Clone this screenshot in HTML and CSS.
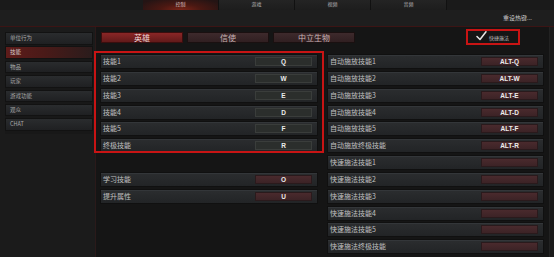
FILE: index.html
```html
<!DOCTYPE html>
<html lang="zh">
<head>
<meta charset="utf-8">
<link rel="stylesheet" href="styles.css">
</head>
<body>
<div class="top">
  <div class="top-spacer"></div>
  <div class="tab active">控制</div>
  <div class="tab">游戏</div>
  <div class="tab">视频</div>
  <div class="tab">音频</div>
</div>
<div class="sub"><span class="reset">重设热键...</span></div>
<div class="main">
  <aside class="side">
    <div class="side-list">
      <div class="side-item">单位行为</div>
      <div class="side-item active">技能</div>
      <div class="side-item">物品</div>
      <div class="side-item">玩家</div>
      <div class="side-item">游戏功能</div>
      <div class="side-item">观众</div>
      <div class="side-item">CHAT</div>
    </div>
  </aside>
  <section class="panel">
    <div class="panel-head">
      <div class="cat active">英雄</div>
      <div class="cat">信使</div>
      <div class="cat">中立生物</div>
      <div class="check">
        <svg class="tick" width="11" height="10" viewBox="0 0 11 10"><path d="M1 5.5 L4 8.5 L10 0.8" fill="none" stroke="#e6e6e6" stroke-width="1.5" stroke-linecap="round" stroke-linejoin="round"/></svg>
        <span>快捷施法</span>
      </div>
    </div>
    <div class="cols">
      <div class="col">
        <div class="row"><span class="lbl">技能1</span><span class="key">Q</span></div>
        <div class="row"><span class="lbl">技能2</span><span class="key">W</span></div>
        <div class="row"><span class="lbl">技能3</span><span class="key">E</span></div>
        <div class="row"><span class="lbl">技能4</span><span class="key">D</span></div>
        <div class="row"><span class="lbl">技能5</span><span class="key">F</span></div>
        <div class="row"><span class="lbl">终极技能</span><span class="key">R</span></div>
        <div class="row-gap"></div>
        <div class="row"><span class="lbl">学习技能</span><span class="key red">O</span></div>
        <div class="row"><span class="lbl">提升属性</span><span class="key red">U</span></div>
      </div>
      <div class="col right">
        <div class="row"><span class="lbl">自动施放技能1</span><span class="key red">ALT-Q</span></div>
        <div class="row"><span class="lbl">自动施放技能2</span><span class="key red">ALT-W</span></div>
        <div class="row"><span class="lbl">自动施放技能3</span><span class="key red">ALT-E</span></div>
        <div class="row"><span class="lbl">自动施放技能4</span><span class="key red">ALT-D</span></div>
        <div class="row"><span class="lbl">自动施放技能5</span><span class="key red">ALT-F</span></div>
        <div class="row"><span class="lbl">自动施放终极技能</span><span class="key red">ALT-R</span></div>
        <div class="row"><span class="lbl">快速施法技能1</span><span class="key red"></span></div>
        <div class="row"><span class="lbl">快速施法技能2</span><span class="key red"></span></div>
        <div class="row"><span class="lbl">快速施法技能3</span><span class="key red"></span></div>
        <div class="row"><span class="lbl">快速施法技能4</span><span class="key red"></span></div>
        <div class="row"><span class="lbl">快速施法技能5</span><span class="key red"></span></div>
        <div class="row"><span class="lbl">快速施法终极技能</span><span class="key red"></span></div>
      </div>
    </div>
    <div class="annot"></div>
  </section>
</div>
</body>
</html>
```
FILE: styles.css
```css
* { box-sizing: border-box; }
html, body { margin: 0; padding: 0; }
body {
  width: 554px;
  height: 257px;
  overflow: hidden;
  background: #1b1b1b;
  font-family: "Noto Sans CJK SC", "Noto Sans", sans-serif;
  color: #c4c4c4;
}
.top {
  display: flex;
  height: 10px;
  background: #1a1a1a;
}
.top-spacer { width: 143px; }
.tab {
  width: 76px;
  height: 10px;
  background: linear-gradient(#242424, #1d1d1d);
  border-right: 1px solid #111;
  font-size: 5px;
  line-height: 8px;
  text-align: center;
  color: #b0b0b0;
}
.tab.active {
  background: radial-gradient(ellipse 60% 130% at 50% 100%, #7a2418 0%, #4a1812 45%, #241414 100%);
  color: #d8c0c0;
}
.sub {
  height: 17px;
  background: #1e1e1e;
  border-bottom: 1px solid #3c1414;
  display: flex;
  justify-content: flex-end;
  align-items: center;
  padding-right: 22px;
}
.reset {
  font-size: 6px;
  color: #c8c8c8;
  line-height: 8px;
}
.main {
  display: flex;
  height: 230px;
}
.side {
  width: 95px;
  padding: 5px 2px 0 5px;
}
.side-list {
  display: flex;
  flex-direction: column;
  gap: 1.9px;
  background: #181818;
  padding-bottom: 3px;
}
.side-item {
  height: 12.5px;
  background: linear-gradient(#2a2c2e, #1f2022);
  border: 1px solid #121212;
  font-size: 5.5px;
  line-height: 10.5px;
  padding-left: 4px;
  color: #a8a8a8;
}
.side-item.active {
  background: linear-gradient(90deg, #5e1c1a 0%, #4a1a18 45%, #2a1c1c 100%);
  color: #d8d0d0;
}
.panel {
  position: relative;
  width: 455px;
  background: #151515;
  border-left: 1px solid #2a1a1a;
  border-right: 1px solid #222;
  padding-left: 4px;
}
.panel-head {
  height: 27px;
  display: flex;
  align-items: flex-start;
  gap: 4px;
  padding-left: 1px;
}
.cat {
  width: 82px;
  height: 11px;
  margin-top: 5px;
  background: linear-gradient(#3e2a2c, #301f21);
  border: 1px solid #1a1010;
  font-size: 8px;
  line-height: 9px;
  text-align: center;
  color: #c8b4b4;
}
.cat.active {
  background: linear-gradient(#8a2626, #621a1a);
  border-color: #3a0e0e;
  color: #f0dada;
}
.check {
  margin-left: auto;
  margin-right: 29px;
  margin-top: 2px;
  width: 54px;
  height: 16px;
  border: 2px solid #c81414;
  display: flex;
  align-items: center;
  padding-left: 8px;
  gap: 2px;
  font-size: 5px;
  color: #c0c0c0;
}
.tick { display: block; margin-top: -2px; }
.cols {
  display: flex;
  gap: 9px;
}
.col {
  width: 218px;
  display: flex;
  flex-direction: column;
  gap: 1.85px;
}
.col.right { width: 217px; }
.row {
  height: 15px;
  display: flex;
  align-items: center;
  justify-content: space-between;
  background: linear-gradient(#2b2d2f, #222426);
  border: 1px solid #101010;
  box-shadow: inset 0 1px 0 #333639;
  padding: 0 5px 0 2px;
}
.row-gap { height: 15px; }
.lbl {
  font-size: 7px;
  line-height: 9px;
  color: #c0c0c0;
}
.key {
  width: 57px;
  height: 9px;
  background: #2b2e2c;
  border: 1px solid #3a3d3b;
  font-family: "Liberation Sans", Arial, sans-serif;
  font-weight: bold;
  font-size: 6.5px;
  line-height: 7px;
  text-align: center;
  color: #ececec;
}
.key.red {
  background: linear-gradient(#4a2a2d, #3c2326);
  border-color: #2a1a1c;
}
.annot {
  position: absolute;
  left: -2px;
  top: 24px;
  width: 230px;
  height: 102px;
  border: 2px solid #c81414;
  pointer-events: none;
}
```
